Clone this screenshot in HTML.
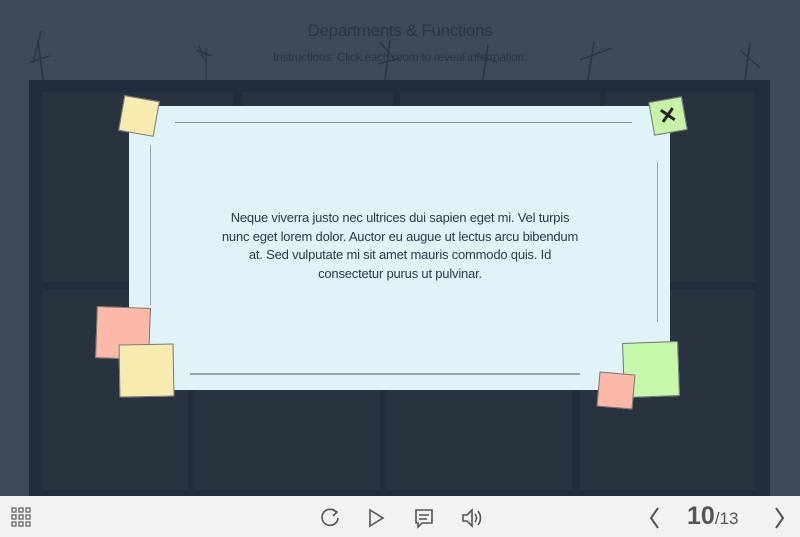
<!DOCTYPE html>
<html><head><meta charset="utf-8"><style>
*{margin:0;padding:0;box-sizing:border-box}
body{width:800px;height:537px;overflow:hidden;background:#3e4a5a;font-family:"Liberation Sans",sans-serif;position:relative}
.abs{position:absolute}
.title{left:0;width:800px;top:21px;text-align:center;font-size:17px;color:#2a3444;letter-spacing:-0.3px}
.instr{left:0;width:800px;top:50px;text-align:center;font-size:12px;color:#2a3444;letter-spacing:-0.3px}
.bld{left:29px;top:80px;width:741px;height:416px;background:#232c3c}
.room{background:#29333f}
.panel{left:129px;top:106px;width:541px;height:284px;background:#dff3f8}
.txt{left:218px;top:209px;width:364px;text-align:center;font-size:13px;line-height:18.5px;color:#2f3a4a;letter-spacing:-0.2px}
.note{position:absolute;border:1px solid #777}
.bar{left:0;top:496px;width:800px;height:41px;background:#f2f2f2}
</style></head><body>
<div class="abs title">Departments &amp; Functions</div>
<div class="abs instr">Instructions: Click each room to reveal information.</div>
<svg class="abs" style="left:0;top:0" width="800" height="90">
<g stroke="#2a3444" stroke-width="1.5" fill="none">
<path d="M41 31 L33 63 M30 62 L50 56 M43 80 L38 40"/>
<path d="M206 48 L206 80 M196 50 L212 56 M199 46 L203 58"/>
<path d="M385 80 L390 40 M378 64 L400 58 M380 42 L395 60"/>
<path d="M483 80 L488 45 M475 55 L497 62"/>
<path d="M745 80 L750 42 M740 50 L760 68"/>
<path d="M588 80 L594 42 M580 60 L612 48"/>
</g></svg>
<div class="abs bld"></div>
<div class="abs room" style="left:43px;top:92px;width:190px;height:190px"></div>
<div class="abs room" style="left:243px;top:92px;width:150px;height:190px"></div>
<div class="abs room" style="left:400px;top:92px;width:200px;height:190px"></div>
<div class="abs room" style="left:605px;top:92px;width:150px;height:190px"></div>
<div class="abs room" style="left:43px;top:290px;width:145px;height:200px"></div>
<div class="abs room" style="left:195px;top:290px;width:185px;height:200px"></div>
<div class="abs room" style="left:387px;top:290px;width:185px;height:200px"></div>
<div class="abs room" style="left:580px;top:290px;width:175px;height:200px"></div>
<div class="abs panel"></div>
<div class="abs" style="left:175px;top:122px;width:457px;height:1px;background:#8a9096"></div>
<div class="abs" style="left:190px;top:373px;width:390px;height:2px;background:#9aa3a8"></div>
<div class="abs" style="left:150px;top:145px;width:1px;height:160px;background:#9aa"></div>
<div class="abs" style="left:657px;top:162px;width:1px;height:160px;background:#9aa"></div>
<div class="abs txt">Neque viverra justo nec ultrices dui sapien eget mi. Vel turpis nunc eget lorem dolor. Auctor eu augue ut lectus arcu bibendum at. Sed vulputate mi sit amet mauris commodo quis. Id consectetur purus ut pulvinar.</div>
<div class="note" style="left:121px;top:98px;width:36px;height:36px;background:#f8ebb0;transform:rotate(10deg)"></div>
<div class="note" style="left:651px;top:99px;width:34px;height:34px;background:#c5f3a8;transform:rotate(-10deg);font-size:22px;font-weight:bold;color:#222;text-align:center;line-height:32px">✕</div>
<div class="note" style="left:96px;top:307px;width:54px;height:52px;background:#fdb9a8;transform:rotate(2deg)"></div>
<div class="note" style="left:119px;top:344px;width:55px;height:53px;background:#f8ebb0;transform:rotate(-1deg)"></div>
<div class="note" style="left:623px;top:342px;width:56px;height:55px;background:#c5f8aa;transform:rotate(-2deg)"></div>
<div class="note" style="left:598px;top:373px;width:36px;height:35px;background:#fdb9a8;transform:rotate(5deg)"></div>
<div class="abs bar"></div>
<svg class="abs" style="left:11px;top:507px" width="20" height="20"><g fill="none" stroke="#666" stroke-width="1.3">
<rect x="1" y="1" width="4" height="4"/><rect x="8" y="1" width="4" height="4"/><rect x="15" y="1" width="4" height="4"/>
<rect x="1" y="8" width="4" height="4"/><rect x="8" y="8" width="4" height="4"/><rect x="15" y="8" width="4" height="4"/>
<rect x="1" y="15" width="4" height="4"/><rect x="8" y="15" width="4" height="4"/><rect x="15" y="15" width="4" height="4"/></g></svg>
<svg class="abs" style="left:318px;top:506px" width="170" height="24"><g fill="none" stroke="#555" stroke-width="1.6">
<path d="M18 6 A8 8 0 1 0 20 12"/><path d="M14 3 L19 6 L15 10"/>
<path d="M52 4 L65 12 L52 20 Z"/>
<path d="M98 4 H114 V17 H104 L100 21 V17 H98 Z"/><path d="M101 9 H111 M101 13 H109"/>
<path d="M145 9 H149 L154 4 V20 L149 15 H145 Z"/><path d="M157 8 Q160 12 157 16 M160 5 Q165 12 160 19"/>
</g></svg>
<svg class="abs" style="left:640px;top:504px" width="160" height="28"><g fill="none" stroke="#555" stroke-width="2">
<path d="M18 4 L11 14 L18 24"/><path d="M136 4 L143 14 L136 24"/></g></svg>
<div class="abs" style="left:687px;top:502px;font-size:25px;font-weight:bold;color:#555">10<span style="font-size:17px;font-weight:normal">/13</span></div>
</body></html>
